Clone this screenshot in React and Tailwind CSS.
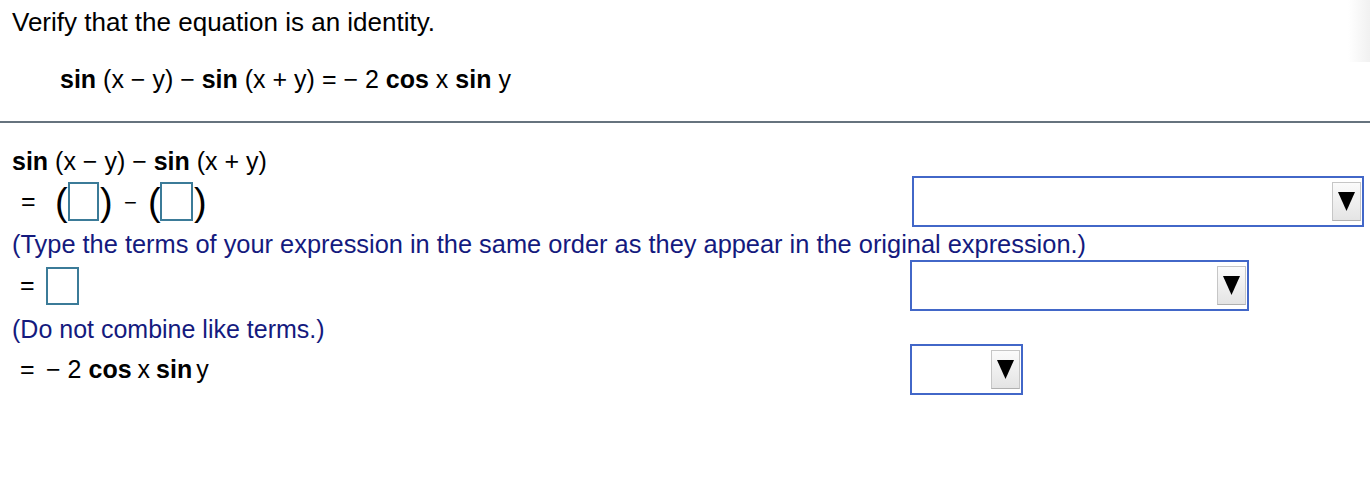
import React from "react";

const Box = ({ w = "w-[31px]", h = "h-[39px]", className = "" }) => (
  <span className={`inline-block ${w} ${h} border-2 border-[#3b7b98] bg-white ${className}`} />
);

const Paren = ({ children, className = "" }) => (
  <span className={`inline-block w-[12px] text-center text-[38px] leading-[40px] ${className}`}>
    {children}
  </span>
);

const Dropdown = ({ width }) => (
  <div
    className={`${width} h-[51px] border-2 border-[#4267c8] bg-white flex items-center justify-end pr-[1px]`}
  >
    <div className="w-[29px] h-[39px] border border-[#c6c6c6] border-b-[#b0b0b0] bg-gradient-to-b from-[#fbfbfb] to-[#e4e4e4] flex items-center justify-center">
      <svg width="17" height="19" viewBox="0 0 17 19">
        <polygon points="0,0 17,0 8.5,19" fill="#000" />
      </svg>
    </div>
  </div>
);

const Sin = () => <b className="font-bold">sin</b>;

export default function App() {
  return (
    <div
      className="w-[1370px] h-[498px] bg-white text-black relative overflow-hidden"
      style={{ fontFamily: '"Liberation Sans", Arial, sans-serif' }}
    >
      <div className="absolute right-0 top-0 w-[22px] h-[62px] bg-gradient-to-r from-transparent to-[#f1f1f1]" />

      {/* Header */}
      <div className="pl-[12px] pt-[7px] h-[121px]">
        <div className="text-[26px] leading-[30px]">Verify that the equation is an identity.</div>
        <div className="pl-[48px] mt-[27px] text-[25px] leading-[30px] whitespace-pre">
          <Sin /> (x − y) − <Sin /> (x + y) = − 2 <b>cos</b> x <Sin /> y
        </div>
      </div>
      <div className="h-[2px] bg-[#66737e]" />

      <div className="pl-[12px] text-[25px]">
        <div className="mt-[23px] leading-[30px] whitespace-pre">
          <Sin /> (x − y) − <Sin /> (x + y)
        </div>

        {/* row 1 */}
        <div className="flex items-center h-[51px]">
          <div className="w-[900px] flex items-center">
            <span className="inline-block w-[15px] ml-[9px]">=</span>
            <Paren className="ml-[19px]">(</Paren>
            <Box className="ml-[1px]" />
            <Paren className="ml-[1px]">)</Paren>
            <span className="inline-block w-[12px] ml-[12px] text-[22px] leading-[22px] text-center translate-y-[1px]">−</span>
            <Paren className="ml-[12px]">(</Paren>
            <Box w="w-[33px]" />
            <Paren className="ml-[1px]">)</Paren>
          </div>
          <Dropdown width="w-[452px]" />
        </div>

        <div className="mt-[2px] leading-[30px] text-[25.4px] text-[#141a7e] whitespace-nowrap">
          (Type the terms of your expression in the same order as they appear in the original expression.)
        </div>

        {/* row 2 */}
        <div className="flex items-center h-[51px] mt-[1px]">
          <div className="w-[898px] flex items-center">
            <span className="inline-block w-[15px] ml-[8px]">=</span>
            <Box w="w-[33px]" h="h-[38px]" className="ml-[11px]" />
          </div>
          <Dropdown width="w-[339px]" />
        </div>

        <div className="mt-[3px] leading-[30px] text-[#141a7e]">(Do not combine like terms.)</div>

        {/* row 3 */}
        <div className="flex items-center h-[51px]">
          <div className="w-[898px] flex items-center">
            <span className="inline-block w-[15px] ml-[8px]">=</span>
            <span className="ml-[11px]">−</span>
            <span className="ml-[7px]">2</span>
            <b className="ml-[7px]">cos</b>
            <span className="ml-[6px]">x</span>
            <b className="ml-[6px]">sin</b>
            <span className="ml-[4px]">y</span>
          </div>
          <Dropdown width="w-[113px]" />
        </div>
      </div>
    </div>
  );
}
